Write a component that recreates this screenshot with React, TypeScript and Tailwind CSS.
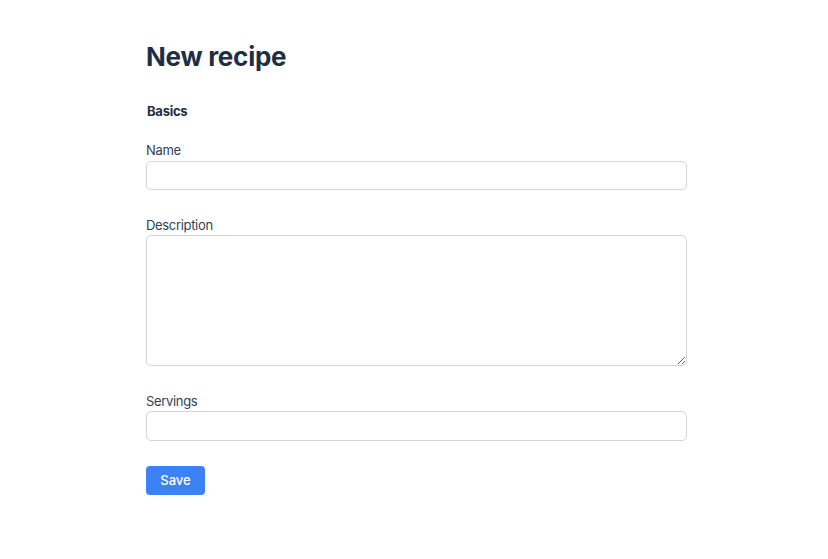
export default function App() {
  return (
    <div className="min-h-screen bg-white text-[#1e293b]" style={{ fontFamily: "Inter, 'Noto Sans', sans-serif" }}>
      <div className="pl-[146px] pt-[40px]">
        <div className="w-[541px]">
          <h1 className="text-[26px] leading-[34px] font-bold tracking-[-0.01em] text-[#1e2f44]">New recipe</h1>
          <h2 className="mt-[29px] ml-px text-[13px] leading-[16px] font-bold tracking-[-0.02em] text-[#1e2f44]">Basics</h2>
          <form className="mt-[23px] flex flex-col">
            <label className="text-[13px] leading-[16px] tracking-[-0.025em] text-[#334155]">Name</label>
            <input type="text" className="mt-[3px] h-[29px] w-full rounded-[5px] border border-[#d4d4d8] bg-white" />
            <label className="mt-[27px] text-[13px] leading-[16px] tracking-[-0.025em] text-[#334155]">Description</label>
            <textarea className="mt-[2px] h-[131px] w-full rounded-[5px] border border-[#d4d4d8] bg-white" />
            <label className="mt-[27px] text-[13px] leading-[16px] tracking-[-0.025em] text-[#334155]">Servings</label>
            <input type="text" className="mt-[2px] h-[30px] w-full rounded-[5px] border border-[#d4d4d8] bg-white" />
            <div className="mt-[25px]">
              <button type="button" className="h-[29px] w-[59px] rounded-[4px] bg-[#3b82f6] text-[13px] font-medium text-white">Save</button>
            </div>
          </form>
        </div>
      </div>
    </div>
  );
}
